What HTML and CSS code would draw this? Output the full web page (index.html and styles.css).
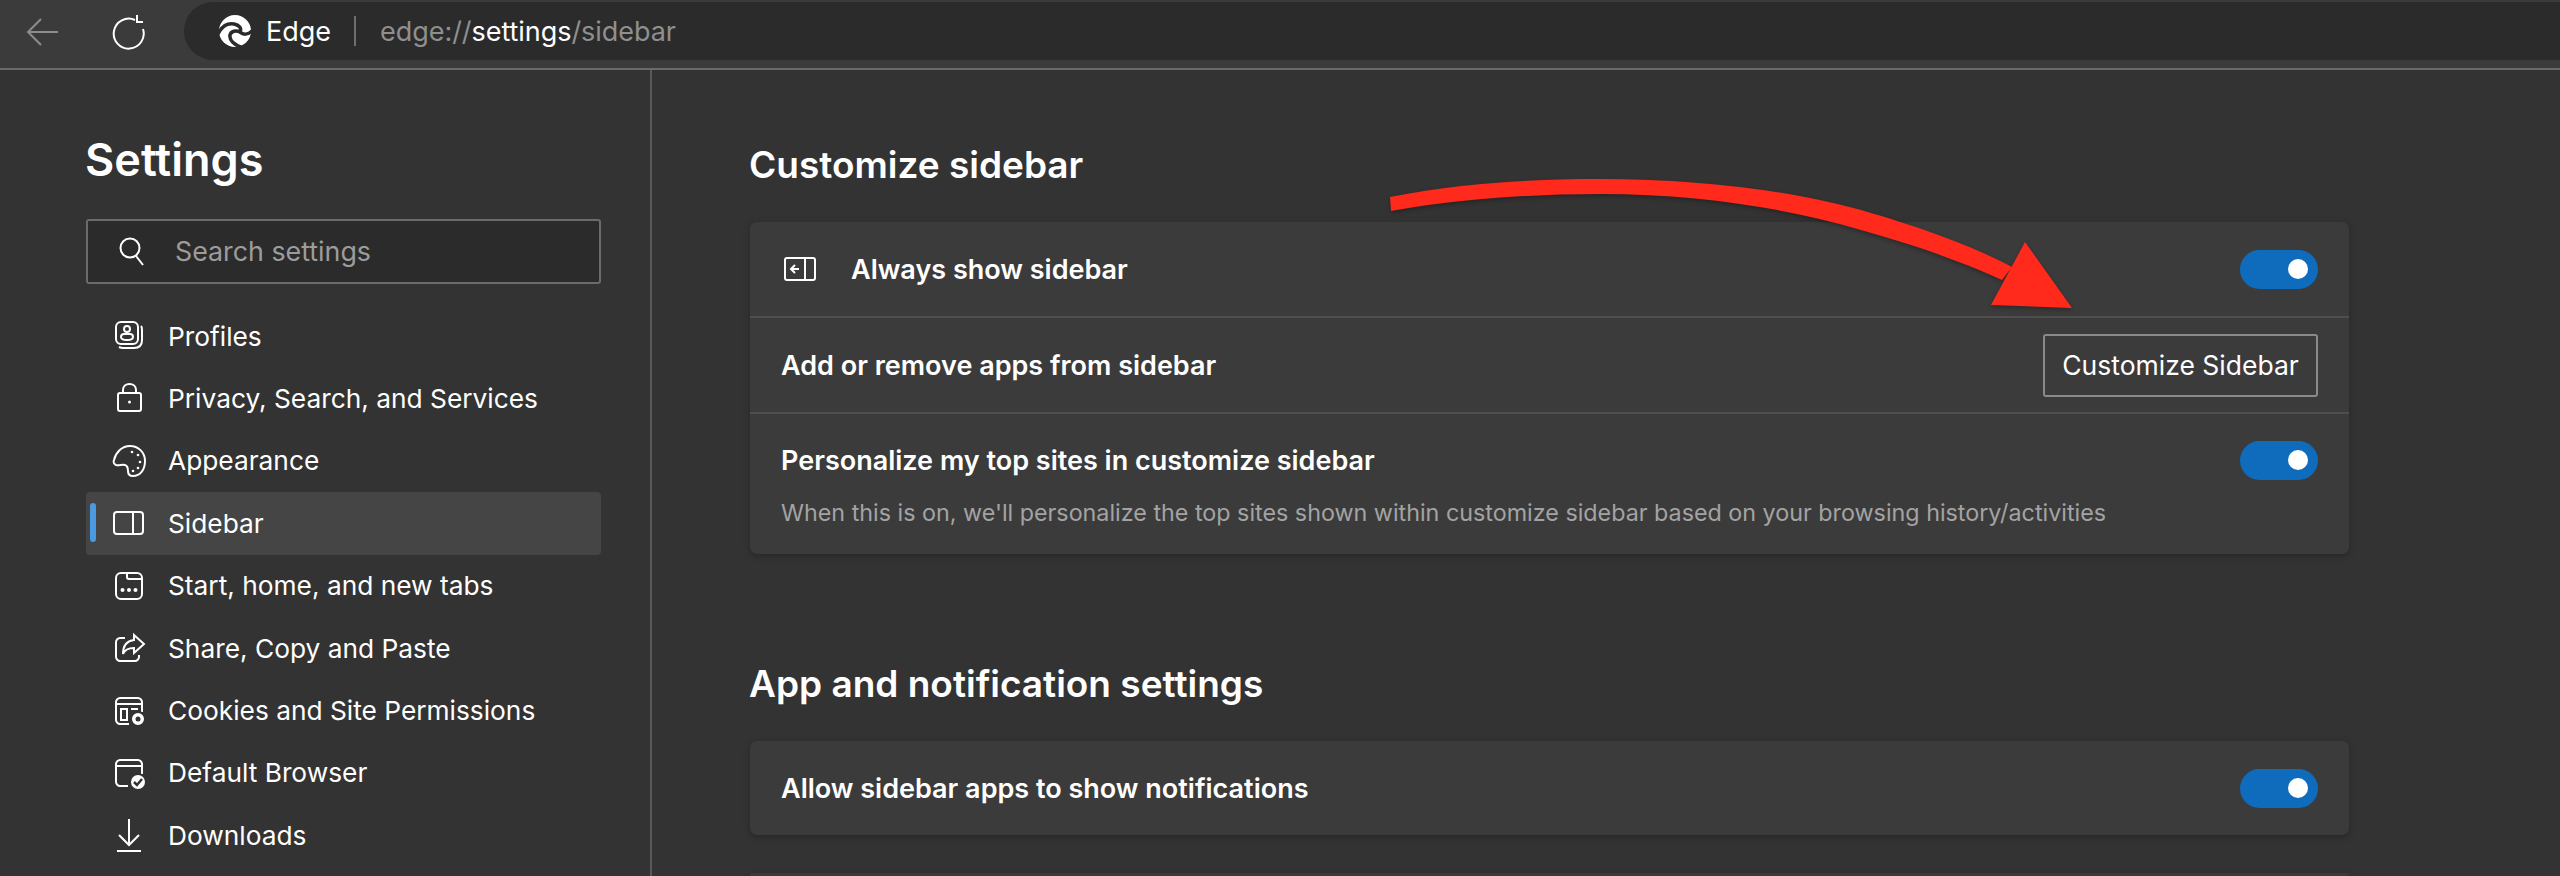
FILE: index.html
```html
<!DOCTYPE html>
<html lang="en">
<head>
  <meta charset="UTF-8">
  <title>Settings - Sidebar</title>
  <link rel="stylesheet" href="styles.css">
</head>
<body>

<header class="toolbar">
  <button class="tool-btn back" aria-label="Back">
    <svg width="36" height="32" viewBox="0 0 36 32"><path d="M33 16H4M16 3 3 16l13 13"/></svg>
  </button>
  <button class="tool-btn reload" aria-label="Refresh">
    <svg width="36" height="36" viewBox="0 0 36 36"><path d="M24 6A15 15 0 1 0 32 15M26 1v7h6"/></svg>
  </button>
  <div class="address">
    <svg class="edge-logo" width="34" height="34" viewBox="0 0 34 34">
      <circle cx="17" cy="17" r="16"/>
      <path class="swirl" d="M0 20C4 12 10 9 16 10c5 1 8 4 6 8-4-2-9-1-10 3-1 5 4 10 13 13"/>
      <path class="swirl" d="M22 18c3 3 8 3 12-1"/>
    </svg>
    <span class="site">Edge</span>
    <span class="site-sep"></span>
    <span class="url">edge://<b>settings</b>/sidebar</span>
  </div>
</header>

<div class="layout">
  <aside class="side">
    <h1>Settings</h1>
    <div class="search">
      <svg width="26" height="30" viewBox="0 0 26 30"><circle cx="11" cy="12" r="9.500"/><path d="m17 20 7 9"/></svg>
      <span>Search settings</span>
    </div>
    <nav class="nav">
      <a class="nav-item">
        <svg viewBox="0 0 36 36"><rect x="4" y="4" width="22" height="22" rx="5"/><circle cx="15" cy="11" r="3"/><path d="M9 19c0-2 1-3 3-3h6c2 0 3 1 3 3s-2 3-6 3-6-1-6-3ZM29 8c1 1 1 2 1 4v10c0 5-3 8-8 8H11c-2 0-3-.500-4-1"/></svg>
        Profiles
      </a>
      <a class="nav-item">
        <svg viewBox="0 0 36 36"><rect x="6" y="12" width="23" height="18" rx="2"/><path d="M11 12V9c0-4 3-6 6.500-6S24 5 24 9v3"/><circle class="dot" cx="17.500" cy="21" r="1.500"/></svg>
        Privacy, Search, and Services
      </a>
      <a class="nav-item">
        <svg viewBox="0 0 36 36"><path d="M18 3c8 0 15 6 15 15s-5 15-12 15c-3 0-5-2-5-5 0-2 0-5-3-6-3-1-6 1-9 0-2-1-3-3-2-5C4 9 10 3 18 3Z"/><circle class="dot" cx="20" cy="9" r="1.300"/><circle class="dot" cx="26" cy="12" r="1.300"/><circle class="dot" cx="28" cy="19" r="1.300"/><circle class="dot" cx="26" cy="25" r="1.300"/><circle class="dot" cx="21" cy="28" r="1.300"/></svg>
        Appearance
      </a>
      <a class="nav-item active">
        <svg viewBox="0 0 36 36"><rect x="2" y="7" width="29" height="22" rx="3"/><path d="M21 7v22"/></svg>
        Sidebar
      </a>
      <a class="nav-item">
        <svg viewBox="0 0 36 36"><rect x="4" y="5" width="26" height="26" rx="5"/><path d="M15 5v4c0 1 1 2 2 2h13"/><circle class="dot" cx="10.500" cy="22" r="2"/><circle class="dot" cx="17" cy="22" r="2"/><circle class="dot" cx="23.500" cy="22" r="2"/></svg>
        Start, home, and new tabs
      </a>
      <a class="nav-item">
        <svg viewBox="0 0 36 36"><path d="M13 8H8c-2 0-4 2-4 4v15c0 2 2 4 4 4h15c2 0 4-2 4-4v-2"/><path d="M22 5l10 9-10 9v-5c-5 0-9 1-11 6 0-7 3-13 11-14Z"/></svg>
        Share, Copy and Paste
      </a>
      <a class="nav-item">
        <svg viewBox="0 0 36 36"><path d="M17 31H8c-2 0-4-2-4-4V9c0-2 2-4 4-4h18c2 0 4 2 4 4v10M4 11h26M9 16h6v11H9ZM19 16h7"/><circle class="fill" cx="26" cy="26" r="7"/><circle class="hole" cx="26" cy="26" r="2.500"/></svg>
        Cookies and Site Permissions
      </a>
      <a class="nav-item">
        <svg viewBox="0 0 36 36"><path d="M16 31H8c-2 0-4-2-4-4V9c0-2 2-4 4-4h18c2 0 4 2 4 4v10M4 11h26"/><circle class="fill" cx="26" cy="27" r="8"/><path class="tick" d="m22 27 3 3 5-6"/></svg>
        Default Browser
      </a>
      <a class="nav-item">
        <svg viewBox="0 0 36 36"><path d="M17 2v26M7 18l10 10 10-10M5 34h24"/></svg>
        Downloads
      </a>
    </nav>
  </aside>

  <main class="content">
    <h2>Customize sidebar</h2>
    <section class="card">
      <div class="row row-always">
        <svg class="row-icon" width="32" height="24" viewBox="0 0 32 24"><rect x="1" y="1" width="30" height="22" rx="2"/><path d="M21 1v22M15 12H7M11 8l-4 4 4 4"/></svg>
        <span class="row-title">Always show sidebar</span>
        <span class="toggle"></span>
      </div>
      <div class="row">
        <span class="row-title">Add or remove apps from sidebar</span>
        <button class="btn">Customize Sidebar</button>
      </div>
      <div class="row row-top">
        <div class="row-text">
          <span class="row-title">Personalize my top sites in customize sidebar</span>
          <p>When this is on, we'll personalize the top sites shown within customize sidebar based on your browsing history/activities</p>
        </div>
        <span class="toggle"></span>
      </div>
    </section>

    <h2 class="second">App and notification settings</h2>
    <section class="card">
      <div class="row row-single">
        <span class="row-title">Allow sidebar apps to show notifications</span>
        <span class="toggle"></span>
      </div>
    </section>
    <section class="card card-next"></section>
  </main>
</div>

<!-- red annotation drawn over the page -->
<svg class="arrow" width="690" height="135" viewBox="0 0 690 135">
  <path d="M0 18C70 4 140 0 212 0 300 0 395 10 471 31 530 48 585 68 622 88L612 101C570 82 525 66 471 51 395 28 300 15 212 15 140 15 70 20 1 32Z"/>
  <path d="M635 63 682 129 601 126Z"/>
</svg>

</body>
</html>
```

FILE: styles.css
```css
* {
  box-sizing: border-box;
}
html, body {
  margin: 0;
  height: 100%;
  overflow: hidden;
}
body {
  position: relative;
  background-color: #333333;
  color: #ffffff;
  font-family: Inter, "Liberation Sans", sans-serif;
}
svg {
  fill: none;
  stroke: currentColor;
  stroke-width: 2;
}

/* browser toolbar */
.toolbar {
  display: flex;
  align-items: flex-start;
  height: 70px;
  padding-top: 2px;
  background-color: #3b3b3b;
  border-bottom: 2px solid #6a6a6a;
}
.tool-btn {
  display: flex;
  padding: 0;
  border: none;
  background: none;
  color: #ffffff;
}
.back {
  margin: 14px 0 0 25px;
  color: #8c8c8c;
}
.reload {
  margin: 12px 0 0 50px;
}
.address {
  display: flex;
  align-items: center;
  flex: 1;
  height: 58px;
  margin-left: 37px;
  padding-left: 34px;
  background-color: #2b2b2b;
  border-radius: 29px 0 0 29px;
  font-size: 27px;
}
.edge-logo {
  margin-right: 14px;
  fill: #ffffff;
  stroke: none;
}
.edge-logo .swirl {
  fill: none;
  stroke: #2b2b2b;
  stroke-width: 3.500;
}
.site-sep {
  width: 2px;
  height: 30px;
  margin: 0 24px 0 23px;
  background-color: #6f6f6f;
}
.url {
  color: #8f8f8f;
  letter-spacing: -0.05px;
}
.url b {
  color: #ffffff;
  font-weight: 400;
}

.layout {
  display: flex;
  height: 806px;
  overflow: hidden;
}

/* left settings menu */
.side {
  flex: none;
  width: 652px;
  padding: 0 49px 0 86px;
  border-right: 2px solid #5a5a5a;
}
.side h1 {
  margin: 0 0 0 -1px;
  padding-top: 63px;
  font-size: 45px;
  line-height: 54px;
  font-weight: 600;
}
.search {
  display: flex;
  align-items: center;
  gap: 30px;
  height: 65px;
  margin-top: 32px;
  padding: 0 0 2px 31px;
  background-color: #2b2b2b;
  border: 2px solid #6b6b6b;
  border-radius: 3px;
  font-size: 26.8px;
  color: #9c9c9c;
}
.search svg {
  color: #ffffff;
}
.nav {
  margin-top: 21px;
}
.nav-item {
  position: relative;
  display: flex;
  align-items: center;
  gap: 20px;
  height: 62.4px;
  padding-left: 26px;
  font-size: 26.3px;
  border-radius: 4px;
  color: #ffffff;
}
.nav-item svg {
  width: 36px;
  height: 36px;
  flex: none;
}
.nav-item .dot {
  fill: #ffffff;
  stroke: none;
}
.nav-item .fill {
  fill: #ffffff;
  stroke: #333333;
  stroke-width: 2;
}
.nav-item .hole {
  fill: #333333;
  stroke: none;
}
.nav-item .tick {
  stroke: #333333;
  stroke-width: 2.500;
}
.nav-item.active {
  background-color: #454545;
}
.nav-item.active::before {
  content: "";
  position: absolute;
  left: 4px;
  top: 11px;
  width: 6px;
  height: 39px;
  border-radius: 3px;
  background-color: #4a9ae1;
}

/* main settings content */
.content {
  flex: 1;
  padding: 0 211px 0 98px;
}
.content h2 {
  margin: 0 0 0 -1px;
  padding-top: 72px;
  font-size: 37px;
  line-height: 46px;
  font-weight: 600;
}
.content h2.second {
  padding-top: 107px;
}
.card {
  margin-top: 34px;
  background-color: #3b3b3b;
  border-radius: 7px;
  box-shadow: 0 2px 7px rgba(0, 0, 0, 0.25);
}
.card-next {
  height: 3px;
  margin-top: 38px;
}
.row {
  display: flex;
  align-items: center;
  justify-content: space-between;
  height: 96px;
  padding: 0 31px;
  border-bottom: 2px solid #4e4e4e;
}
.row:last-child {
  border-bottom: none;
}
.row-always {
  justify-content: flex-start;
  padding-left: 34px;
}
.row-icon {
  margin-right: 35px;
}
.row-always .toggle {
  margin-left: auto;
}
.row-top {
  align-items: flex-start;
  height: 140px;
  padding-top: 30px;
}
.row-top .toggle {
  margin-top: -3px;
}
.row-single {
  height: 94px;
}
.row-title {
  font-size: 27px;
  font-weight: 600;
}
.row-text p {
  margin: 21px 0 0;
  font-size: 23.3px;
  color: #a3a3a3;
}
.toggle {
  position: relative;
  flex: none;
  width: 78px;
  height: 39px;
  border-radius: 20px;
  background-color: #0f6cbd;
}
.toggle::after {
  content: "";
  position: absolute;
  right: 10px;
  top: 9px;
  width: 20px;
  height: 20px;
  border-radius: 50%;
  background-color: #ffffff;
}
.btn {
  width: 275px;
  height: 63px;
  padding: 0;
  background: none;
  border: 2px solid #8a8a8a;
  border-radius: 3px;
  color: #ffffff;
  font-family: inherit;
  font-size: 26.500px;
}

.arrow {
  position: absolute;
  left: 1390px;
  top: 179px;
  stroke: none;
  fill: #ff2a1c;
  filter: drop-shadow(0 2px 2px rgba(0, 0, 0, 0.3));
}
```
